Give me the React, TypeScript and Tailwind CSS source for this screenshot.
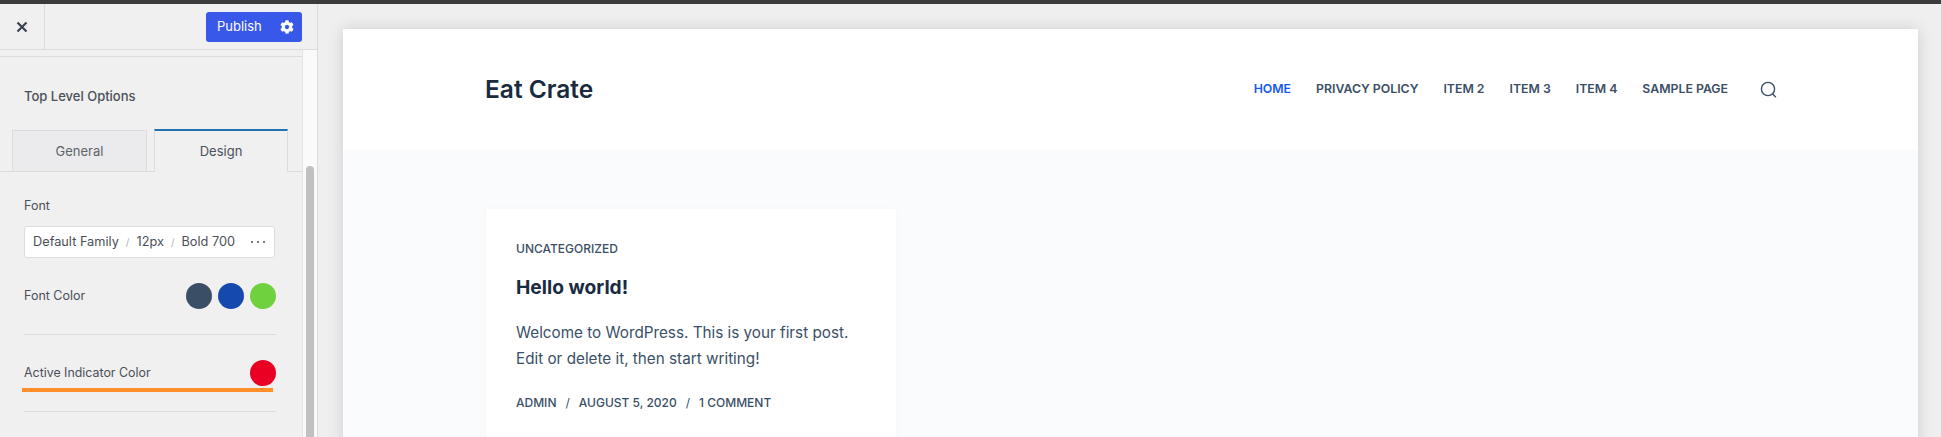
import React from "react";

function Gear() {
  return (
    <svg width="14" height="14" viewBox="0 0 512 512" fill="#fff">
      <path d="M487.4 315.7l-42.6-24.6c4.3-23.2 4.3-47 0-70.2l42.6-24.6c4.9-2.8 7.1-8.6 5.5-14-11.1-35.6-30-67.8-54.7-94.6-3.8-4.1-10-5.1-14.8-2.3L380.8 110c-17.9-15.4-38.5-27.3-60.8-35.1V25.8c0-5.6-3.9-10.5-9.4-11.7-36.7-8.2-74.3-7.8-109.2 0-5.5 1.2-9.4 6.1-9.4 11.7V75c-22.2 7.9-42.8 19.8-60.8 35.1L88.7 85.5c-4.9-2.8-11-1.9-14.8 2.3-24.7 26.7-43.6 58.9-54.7 94.6-1.7 5.4.6 11.2 5.5 14L67.3 221c-4.3 23.2-4.3 47 0 70.2l-42.6 24.6c-4.9 2.8-7.1 8.6-5.5 14 11.1 35.6 30 67.8 54.7 94.6 3.8 4.1 10 5.1 14.8 2.3l42.6-24.6c17.9 15.4 38.5 27.3 60.8 35.1v49.2c0 5.6 3.9 10.5 9.4 11.7 36.7 8.2 74.3 7.8 109.2 0 5.5-1.2 9.4-6.1 9.4-11.7v-49.2c22.2-7.9 42.8-19.8 60.8-35.1l42.6 24.6c4.9 2.8 11 1.9 14.8-2.3 24.7-26.7 43.6-58.9 54.7-94.6 1.5-5.5-.7-11.3-5.6-14.1zM256 336c-44.1 0-80-35.9-80-80s35.9-80 80-80 80 35.9 80 80-35.9 80-80 80z" />
    </svg>
  );
}

function Sidebar() {
  return (
    <aside className="flex h-full w-[318px] shrink-0 flex-col border-r border-[#dcdcde] bg-[#f0f0f1] text-[#4b4f58]">
      <div className="flex h-[46px] shrink-0 items-center border-b border-[#dcdcde]">
        <div className="flex h-full w-[46px] -ml-px items-center justify-center border-r border-[#dcdcde]">
          <svg width="12" height="12" viewBox="0 0 12 12" stroke="#3c434a" strokeWidth="2.2" fill="none">
            <path d="M1.5 1.5l9 9M10.5 1.5l-9 9" />
          </svg>
        </div>
        <div className="ml-auto mr-[15px] flex h-[30px] w-[96px] items-center rounded-[3px] bg-[#3858e9] text-[13px] text-white">
          <span className="w-[66px] pl-[11px]">Publish</span>
          <span className="flex flex-1 items-center justify-center"><Gear /></span>
        </div>
      </div>
      <div className="flex min-h-0 flex-1">
        <div className="w-[302px] shrink-0">
          <div className="mt-[6px] border-t border-[#dcdcde] px-6 pt-[29px] text-[13px] font-medium leading-[20px]">Top Level Options</div>
          <div className="mt-[24px] flex h-[42px] items-end gap-[7px] border-b border-[#dcdcde] pl-3">
            <div className="-mb-px flex h-[42px] w-[135px] items-center justify-center border border-[#dcdcde] bg-[#ebebed] pt-px text-[13px] text-[#5f6368]">General</div>
            <div className="-mb-px flex h-[43px] w-[134px] items-center justify-center border-x border-t-2 border-x-[#dcdcde] border-t-[#2271b1] bg-[#f0f0f1] pt-px text-[13px]">Design</div>
          </div>
          <div className="px-6">
            <div className="mt-[24px] text-[12.5px] leading-[20px]">Font</div>
            <div className="mt-[10px] flex h-[32px] w-[251px] items-center rounded-[3px] border border-[#dddde0] bg-white pl-[8px] pr-[9px] text-[12.75px]">
              <span>Default Family</span>
              <span className="mx-[7px] text-[10px] text-[#b0b0b4]">/</span>
              <span>12px</span>
              <span className="mx-[7px] text-[10px] text-[#b0b0b4]">/</span>
              <span>Bold 700</span>
              <span className="ml-auto flex gap-[3.5px]">
                <i className="h-[2.5px] w-[2.5px] rounded-full bg-[#4b4f58]" />
                <i className="h-[2.5px] w-[2.5px] rounded-full bg-[#4b4f58]" />
                <i className="h-[2.5px] w-[2.5px] rounded-full bg-[#4b4f58]" />
              </span>
            </div>
            <div className="mt-[25px] flex w-[252px] items-center justify-between">
              <span className="text-[12.5px]">Font Color</span>
              <span className="flex gap-[6px]">
                <i className="h-[26px] w-[26px] rounded-full bg-[#3a4f66]" />
                <i className="h-[26px] w-[26px] rounded-full bg-[#1549ae]" />
                <i className="h-[26px] w-[26px] rounded-full bg-[#6fd13e]" />
              </span>
            </div>
            <div className="mt-[25px] w-[252px] border-t border-[#dcdcde]" />
            <div className="mt-[25px] flex w-[252px] items-center justify-between">
              <span className="text-[12.4px]">Active Indicator Color</span>
              <i className="h-[26px] w-[26px] rounded-full bg-[#ea0023]" />
            </div>
            <div className="-ml-[2px] mt-[2px] h-[4px] w-[251px] bg-[#ff8e2b]" />
            <div className="mt-[19px] w-[252px] border-t border-[#dcdcde]" />
          </div>
        </div>
        <div className="flex w-[15px] flex-col border-l border-[#e4e4e4] bg-[#fafafa] pl-[3px]">
          <div className="mt-[116px] w-[8px] flex-1 rounded-t-[4px] bg-[#c1c1c1]" />
        </div>
      </div>
    </aside>
  );
}

function Preview() {
  const nav = ["Privacy Policy", "Item 2", "Item 3", "Item 4", "Sample Page"];
  return (
    <main className="min-w-0 flex-1 bg-[#efefef] pl-[25px] pr-[23px] pt-[25px]">
      <div className="h-[420px] overflow-hidden bg-[#fafbfc] shadow-[0_0_15px_rgba(0,0,0,0.14)]">
        <header className="flex h-[120px] items-center bg-white pl-[142px] pr-[141px]">
          <span className="mt-[1px] text-[24.5px] font-semibold leading-none text-[#1a2b3f]">Eat Crate</span>
          <nav className="ml-auto flex items-center gap-[25px] text-[12.3px] font-semibold uppercase text-[#3a4f66]">
            <span className="text-[#1559ed]">Home</span>
            {nav.map((n) => <span key={n}>{n}</span>)}
            <svg className="ml-[7px]" width="17" height="17" viewBox="0 0 17 17" fill="none" stroke="#3a4f66" strokeWidth="1.4">
              <circle cx="8" cy="8" r="6.6" />
              <path d="M12.6 12.6l3.2 3.6" />
            </svg>
          </nav>
        </header>
        <article className="ml-[143px] mt-[60px] h-[300px] w-[410px] bg-white px-[30px] pt-[30px] shadow-[0_0_10px_rgba(30,40,60,0.02)]">
          <div className="text-[12px] font-medium uppercase leading-[20px] text-[#3a4f66]">Uncategorized</div>
          <h2 className="mt-[16px] text-[19.2px] font-bold leading-[24px] text-[#1a2b3f]">Hello world!</h2>
          <p className="mt-[21px] text-[15.25px] leading-[26px] text-[#3a4f66]">
            Welcome to WordPress. This is your first post.<br />Edit or delete it, then start writing!
          </p>
          <div className="mt-[21px] flex text-[12px] font-medium uppercase leading-[20px] text-[#3a4f66]">
            <span>Admin</span><span className="mx-[9px] font-normal">/</span>
            <span>August 5, 2020</span><span className="mx-[9px] font-normal">/</span>
            <span>1 Comment</span>
          </div>
        </article>
      </div>
    </main>
  );
}

export default function App() {
  return (
    <div className="flex h-[437px] w-[1941px] flex-col overflow-hidden font-['Inter',sans-serif]">
      <div className="h-[4px] shrink-0 bg-[#3a3b3d]" />
      <div className="flex min-h-0 flex-1">
        <Sidebar />
        <Preview />
      </div>
    </div>
  );
}
